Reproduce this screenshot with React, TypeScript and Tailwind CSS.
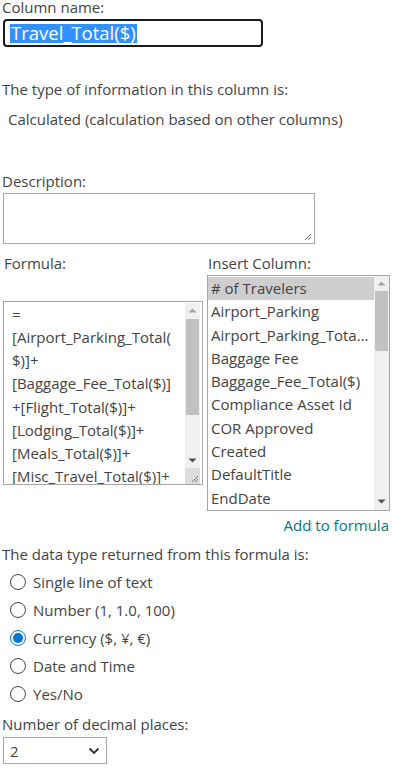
import React from "react";

const font = { fontFamily: '"Open Sans", "Noto Sans", sans-serif' };

function Radio({ label, checked, top }: { label: string; checked?: boolean; top: string }) {
  return (
    <div className={`flex items-center h-[28px] ${top}`}>
      <div className="w-[33px] flex items-center pl-[10px]">
        {checked ? (
          <div className="w-[16px] h-[16px] rounded-full border border-[#0078d4] bg-white flex items-center justify-center">
            <div className="w-[10px] h-[10px] rounded-full bg-[#0078d4]" />
          </div>
        ) : (
          <div className="w-[16px] h-[16px] rounded-full border border-[#444] bg-white" />
        )}
      </div>
      <span>{label}</span>
    </div>
  );
}

function UpArrow() {
  return (
    <svg width="9" height="5" viewBox="0 0 9 5">
      <path d="M0.5 4.5 L4.5 0.5 L8.5 4.5 Z" fill="#a3a3a3" />
    </svg>
  );
}
function DownArrow() {
  return (
    <svg width="9" height="5" viewBox="0 0 9 5">
      <path d="M0.5 0.5 L4.5 4.5 L8.5 0.5 Z" fill="#505050" />
    </svg>
  );
}

export default function App() {
  const formula = [
    "=",
    "[Airport_Parking_Total(",
    "$)]+",
    "[Baggage_Fee_Total($)]",
    "+[Flight_Total($)]+",
    "[Lodging_Total($)]+",
    "[Meals_Total($)]+",
    "[Misc_Travel_Total($)]+",
  ];
  const cols = [
    "# of Travelers",
    "Airport_Parking",
    "Airport_Parking_Tota...",
    "Baggage Fee",
    "Baggage_Fee_Total($)",
    "Compliance Asset Id",
    "COR Approved",
    "Created",
    "DefaultTitle",
    "EndDate",
  ];
  return (
    <div className="w-[406px] h-[770px] bg-white text-[#444] text-[15px] leading-[20px] overflow-hidden relative" style={font}>
      <div className="pl-[2px] mt-[-3px]">Column name:</div>
      <div className="ml-[3px] mt-[2px] w-[260px] h-[28px] border-2 border-[#1a1a1a] rounded-[4px] flex items-center pl-[5px]">
        <span className="bg-[#3390ff] text-white text-[18.5px] leading-[18px] pb-[1px] px-[1px] mt-[1px]">Travel_Total($)</span>
      </div>
      <div className="pl-[2px] mt-[32px]">The type of information in this column is:</div>
      <div className="pl-[8px] mt-[10px]">Calculated (calculation based on other columns)</div>
      <div className="pl-[2px] mt-[42px]">Description:</div>
      <div className="ml-[3px] mt-[2px] w-[312px] h-[51px] border border-[#a6a6a6] relative">
        <svg className="absolute right-[2px] bottom-[2px]" width="8" height="8" viewBox="0 0 8 8">
          <path d="M1 7 L7 1 M4 7 L7 4" stroke="#777" strokeWidth="1" />
        </svg>
      </div>
      <div className="flex mt-[9px]">
        <div className="w-[204px] pl-[3px] flex flex-col">
          <div className="pl-[1px]">Formula:</div>
          <div className="mt-[28px] w-[200px] h-[184px] border border-[#a6a6a6] flex">
            <div className="flex-1 pl-[8px] pt-[1px] overflow-hidden">
              {formula.map((l, i) => (
                <div key={i} className="h-[23.15px] leading-[23.15px] whitespace-nowrap">{l}</div>
              ))}
            </div>
            <div className="w-[15px] bg-[#f0f0f0] flex flex-col items-center mr-[2px] mt-[1px]">
              <div className="h-[15px] flex items-center justify-center"><UpArrow /></div>
              <div className="w-[13px] h-[96px] bg-[#c1c1c1] mt-[1px]" />
              <div className="flex-1 flex items-end justify-center pb-[5px]"><DownArrow /></div>
              <div className="w-[15px] h-[16px] bg-[#dcdcdc] relative">
                <svg className="absolute right-[1px] bottom-[1px]" width="8" height="8" viewBox="0 0 8 8">
                  <path d="M1 7 L7 1 M4 7 L7 4" stroke="#777" strokeWidth="1" />
                </svg>
              </div>
            </div>
          </div>
        </div>
        <div className="flex flex-col">
          <div className="pl-[4px]">Insert Column:</div>
          <div className="mt-[2px] ml-[3px] w-[183px] h-[236px] border border-[#a6a6a6] flex">
            <div className="flex-1 pt-[1px]">
              {cols.map((c, i) => (
                <div
                  key={i}
                  className={`h-[23.3px] leading-[23.3px] pl-[3px] whitespace-nowrap ${i === 0 ? "bg-[#cecece]" : ""}`}
                >
                  {c}
                </div>
              ))}
            </div>
            <div className="w-[15px] bg-[#f0f0f0] flex flex-col items-center">
              <div className="h-[15px] flex items-center justify-center"><UpArrow /></div>
              <div className="w-[13px] h-[60px] bg-[#c1c1c1]" />
              <div className="flex-1 flex items-end justify-center pb-[6px]"><DownArrow /></div>
            </div>
          </div>
          <div className="text-right text-[#03787c] mt-[4px] pr-[1px]">Add to formula</div>
        </div>
      </div>
      <div className="pl-[2px] mt-[9px]">The data type returned from this formula is:</div>
      <Radio label="Single line of text" top="mt-[4px]" />
      <Radio label="Number (1, 1.0, 100)" top="" />
      <Radio label="Currency ($, ¥, €)" checked top="" />
      <Radio label="Date and Time" top="" />
      <Radio label="Yes/No" top="" />
      <div className="pl-[2px] mt-[6px]">Number of decimal places:</div>
      <div className="ml-[3px] mt-[3px] w-[104px] h-[27px] border border-[#a6a6a6] flex items-center justify-between pl-[6px] pr-[6px]">
        <span>2</span>
        <svg width="12" height="8" viewBox="0 0 12 8">
          <path d="M1.5 1.5 L6 6 L10.5 1.5" stroke="#333" strokeWidth="1.8" fill="none" />
        </svg>
      </div>
    </div>
  );
}
